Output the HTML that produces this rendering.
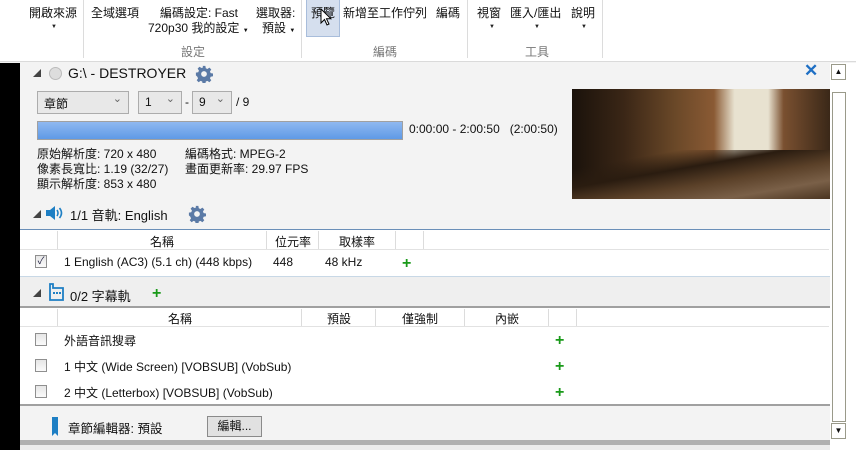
<!DOCTYPE html><html><head><meta charset="utf-8"><style>
*{margin:0;padding:0;box-sizing:border-box}
body{width:856px;height:450px;overflow:hidden;background:#f3f3f3;font-family:"Liberation Sans","Noto Sans CJK TC",sans-serif;font-size:12px;color:#111;position:relative}
.a{position:absolute;white-space:nowrap}
.dd{position:absolute;background:#e8e8e8;border:1px solid #acacac;height:23px;padding:3px 6px;font-size:12px}
.dd:after{content:"⌄";position:absolute;right:6px;top:0;color:#666;font-size:11px}
.vl{position:absolute;width:1px;background:#dcdcdc}
.hl{position:absolute;height:1px}
.cb{position:absolute;width:12px;height:13px;border:1px solid #8f8f8f;background:linear-gradient(#e6e6e6,#fafafa)}
.plus{position:absolute;color:#1a9a1a;font-weight:bold;font-size:16px;line-height:16px}
.gear{position:absolute;width:18px;height:18px}
.ar{position:absolute;font-size:6px;color:#222}
</style></head><body>
<div class="a" style="left:0;top:0;width:856px;height:62px;background:#fff;border-bottom:1px solid #dadada"></div>
<div class="a" style="left:306px;top:0;width:34px;height:37px;background:#d5dfee;border:1px solid #a8bddb;border-top:none"></div>
<div class="a" style="left:29px;top:4px">開啟來源</div>
<div class="ar" style="left:51px;top:24px">▼</div>
<div class="vl" style="left:83px;top:0;height:58px"></div>
<div class="a" style="left:91px;top:4px">全域選項</div>
<div class="a" style="left:160px;top:4px">編碼設定: Fast</div>
<div class="a" style="left:148px;top:19px">720p30 我的設定 <span style="font-size:6px">▼</span></div>
<div class="a" style="left:256px;top:4px">選取器:</div>
<div class="a" style="left:262px;top:19px">預設 <span style="font-size:6px">▼</span></div>
<div class="a" style="left:181px;top:43px;color:#777">設定</div>
<div class="vl" style="left:301px;top:0;height:58px"></div>
<div class="a" style="left:311px;top:4px">預覽</div>
<svg class="a" style="left:320px;top:8px" width="12" height="18" viewBox="0 0 12 18"><path d="M1 1v14l3.5-3.5 2.5 5.5 2-1-2.5-5.2H11z" fill="#fff" stroke="#000" stroke-width="1"/></svg>
<div class="a" style="left:343px;top:4px">新增至工作佇列</div>
<div class="a" style="left:436px;top:4px">編碼</div>
<div class="a" style="left:373px;top:43px;color:#777">編碼</div>
<div class="vl" style="left:467px;top:0;height:58px"></div>
<div class="a" style="left:477px;top:4px">視窗</div>
<div class="ar" style="left:489px;top:24px">▼</div>
<div class="a" style="left:510px;top:4px">匯入/匯出</div>
<div class="ar" style="left:534px;top:24px">▼</div>
<div class="a" style="left:571px;top:4px">說明</div>
<div class="ar" style="left:581px;top:24px">▼</div>
<div class="a" style="left:525px;top:43px;color:#777">工具</div>
<div class="vl" style="left:602px;top:0;height:58px"></div>
<div class="a" style="left:0;top:63px;width:20px;height:387px;background:#000"></div>
<div class="a" style="left:830px;top:63px;width:26px;height:387px;background:#fff"></div>
<div class="a" style="left:831px;top:64px;width:15px;height:16px;border:1px solid #9a9a8a;text-align:center;font-size:8px;line-height:14px">▲</div>
<div class="a" style="left:832px;top:92px;width:14px;height:330px;border:1px solid #9a9a8a"></div>
<div class="a" style="left:831px;top:423px;width:15px;height:16px;border:1px solid #9a9a8a;text-align:center;font-size:8px;line-height:14px">▼</div>
<div class="a" style="left:33px;top:68px;font-size:8px;color:#444">◢</div>
<div class="a" style="left:49px;top:67px;width:13px;height:13px;border-radius:50%;background:#ddd;border:1px solid #bbb"></div>
<div class="a" style="left:68px;top:65px;font-size:14px">G:\ - DESTROYER</div>
<svg class="gear" style="left:195px;top:65px" viewBox="0 0 20 20"><path fill="#5b7aa6" d="M8.5 1h3l.5 2.6 1.8.8 2.2-1.5 2.1 2.1-1.5 2.2.8 1.8 2.6.5v3l-2.6.5-.8 1.8 1.5 2.2-2.1 2.1-2.2-1.5-1.8.8-.5 2.6h-3l-.5-2.6-1.8-.8-2.2 1.5-2.1-2.1 1.5-2.2-.8-1.8L1 11.5v-3l2.6-.5.8-1.8-1.5-2.2 2.1-2.1 2.2 1.5 1.8-.8z"/><circle cx="10" cy="10" r="3.2" fill="#f3f3f3"/></svg>
<div class="a" style="left:804px;top:61px;font-size:17px;color:#1e6fc4;font-weight:bold">✕</div>
<div class="dd" style="left:37px;top:91px;width:92px">章節</div>
<div class="dd" style="left:138px;top:91px;width:44px">1</div>
<div class="a" style="left:185px;top:95px">-</div>
<div class="dd" style="left:192px;top:91px;width:40px">9</div>
<div class="a" style="left:236px;top:95px">/ 9</div>
<div class="a" style="left:37px;top:121px;width:366px;height:19px;background:linear-gradient(#8fb8f0,#5f9ae6);border:1px solid #a0a0a0"></div>
<div class="a" style="left:409px;top:122px">0:00:00 - 2:00:50&nbsp;&nbsp;&nbsp;(2:00:50)</div>
<div class="a" style="left:37px;top:147px;line-height:15px">原始解析度: 720 x 480<br>像素長寬比: 1.19 (32/27)<br>顯示解析度: 853 x 480</div>
<div class="a" style="left:185px;top:147px;line-height:15px">編碼格式: MPEG-2<br>畫面更新率: 29.97 FPS</div>
<div class="a" style="left:572px;top:89px;width:258px;height:110px;background:linear-gradient(90deg,#1a120b 0%,#3a2616 20%,#6a4828 40%,#8a5a34 55%,#e8e2d0 63%,#e8e2d0 76%,#7a5030 82%,#3a2818 100%)"></div>
<div class="a" style="left:572px;top:150px;width:258px;height:49px;background:linear-gradient(170deg,transparent 20%,#2a1c10 40%,#5a4028 60%,#7a6048 80%,#4a3420)"></div>
<div class="a" style="left:33px;top:209px;font-size:8px;color:#444">◢</div>
<svg class="a" style="left:45px;top:205px" width="20" height="16" viewBox="0 0 20 16"><path d="M1 5h4l5-4v14l-5-4H1z" fill="#1e7fc4"/><path d="M12 5q2 3 0 6M14.5 3q4 5 0 10" stroke="#1e7fc4" stroke-width="1.6" fill="none"/></svg>
<div class="a" style="left:70px;top:205px;font-size:13px">1/1 音軌: English</div>
<svg class="gear" style="left:188px;top:205px" viewBox="0 0 20 20"><path fill="#5b7aa6" d="M8.5 1h3l.5 2.6 1.8.8 2.2-1.5 2.1 2.1-1.5 2.2.8 1.8 2.6.5v3l-2.6.5-.8 1.8 1.5 2.2-2.1 2.1-2.2-1.5-1.8.8-.5 2.6h-3l-.5-2.6-1.8-.8-2.2 1.5-2.1-2.1 1.5-2.2-.8-1.8L1 11.5v-3l2.6-.5.8-1.8-1.5-2.2 2.1-2.1 2.2 1.5 1.8-.8z"/><circle cx="10" cy="10" r="3.2" fill="#f3f3f3"/></svg>
<div class="a" style="left:20px;top:229px;width:810px;height:48px;background:#fff;border-top:1px solid #6a8fb8;border-bottom:1px solid #c8d8e6"></div>
<div class="hl" style="left:20px;top:249px;width:809px;background:#e2e2e2"></div>
<div class="vl" style="left:57px;top:231px;height:18px"></div>
<div class="vl" style="left:266px;top:231px;height:18px"></div>
<div class="vl" style="left:318px;top:231px;height:18px"></div>
<div class="vl" style="left:395px;top:231px;height:18px"></div>
<div class="vl" style="left:423px;top:231px;height:18px"></div>
<div class="a" style="left:150px;top:233px">名稱</div>
<div class="a" style="left:275px;top:233px">位元率</div>
<div class="a" style="left:339px;top:233px">取樣率</div>
<div class="cb" style="left:35px;top:255px;font-size:10px;line-height:11px;color:#224;text-align:center">✓</div>
<div class="a" style="left:64px;top:255px">1 English (AC3) (5.1 ch) (448 kbps)</div>
<div class="a" style="left:273px;top:255px">448</div>
<div class="a" style="left:325px;top:255px">48 kHz</div>
<div class="plus" style="left:402px;top:256px">+</div>
<div class="a" style="left:20px;top:277px;width:810px;height:30px;background:#efefef"></div>
<div class="a" style="left:33px;top:288px;font-size:8px;color:#444">◢</div>
<svg class="a" style="left:48px;top:283px" width="16" height="18" viewBox="0 0 16 18"><path d="M2 1v16h13V5H5V1z" fill="none" stroke="#1e7fc4" stroke-width="1.8"/><path d="M5 10h2M8 10h2M11 10h2" stroke="#1e7fc4" stroke-width="2"/></svg>
<div class="a" style="left:70px;top:286px;font-size:13px">0/2 字幕軌</div>
<div class="plus" style="left:152px;top:286px">+</div>
<div class="a" style="left:20px;top:306px;width:810px;height:100px;background:#fff;border-top:2px solid #a0a0a0;border-bottom:2px solid #a0a0a0"></div>
<div class="hl" style="left:20px;top:326px;width:809px;background:#e2e2e2"></div>
<div class="vl" style="left:57px;top:309px;height:17px"></div>
<div class="vl" style="left:301px;top:309px;height:17px"></div>
<div class="vl" style="left:375px;top:309px;height:17px"></div>
<div class="vl" style="left:464px;top:309px;height:17px"></div>
<div class="vl" style="left:548px;top:309px;height:17px"></div>
<div class="vl" style="left:576px;top:309px;height:17px"></div>
<div class="a" style="left:168px;top:310px">名稱</div>
<div class="a" style="left:327px;top:310px">預設</div>
<div class="a" style="left:402px;top:310px">僅強制</div>
<div class="a" style="left:495px;top:310px">內嵌</div>
<div class="cb" style="left:35px;top:333px"></div>
<div class="a" style="left:64px;top:332px">外語音訊搜尋</div>
<div class="plus" style="left:555px;top:333px">+</div>
<div class="cb" style="left:35px;top:359px"></div>
<div class="a" style="left:64px;top:358px">1 中文 (Wide Screen) [VOBSUB] (VobSub)</div>
<div class="plus" style="left:555px;top:359px">+</div>
<div class="cb" style="left:35px;top:385px"></div>
<div class="a" style="left:64px;top:384px">2 中文 (Letterbox) [VOBSUB] (VobSub)</div>
<div class="plus" style="left:555px;top:385px">+</div>
<svg class="a" style="left:52px;top:417px" width="7" height="19" viewBox="0 0 7 19"><path d="M0 0h6v19l-3-3-3 3z" fill="#1e7fc4"/></svg>
<div class="a" style="left:68px;top:418px;font-size:12.5px">章節編輯器: 預設</div>
<div class="a" style="left:207px;top:416px;width:55px;height:21px;background:#e1e1e1;border:1px solid #8a8a8a;text-align:center;line-height:19px">編輯...</div>
<div class="a" style="left:20px;top:440px;width:810px;height:5px;background:#b0b0b0"></div>
<div class="a" style="left:20px;top:445px;width:810px;height:5px;background:#ececec"></div>
</body></html>
